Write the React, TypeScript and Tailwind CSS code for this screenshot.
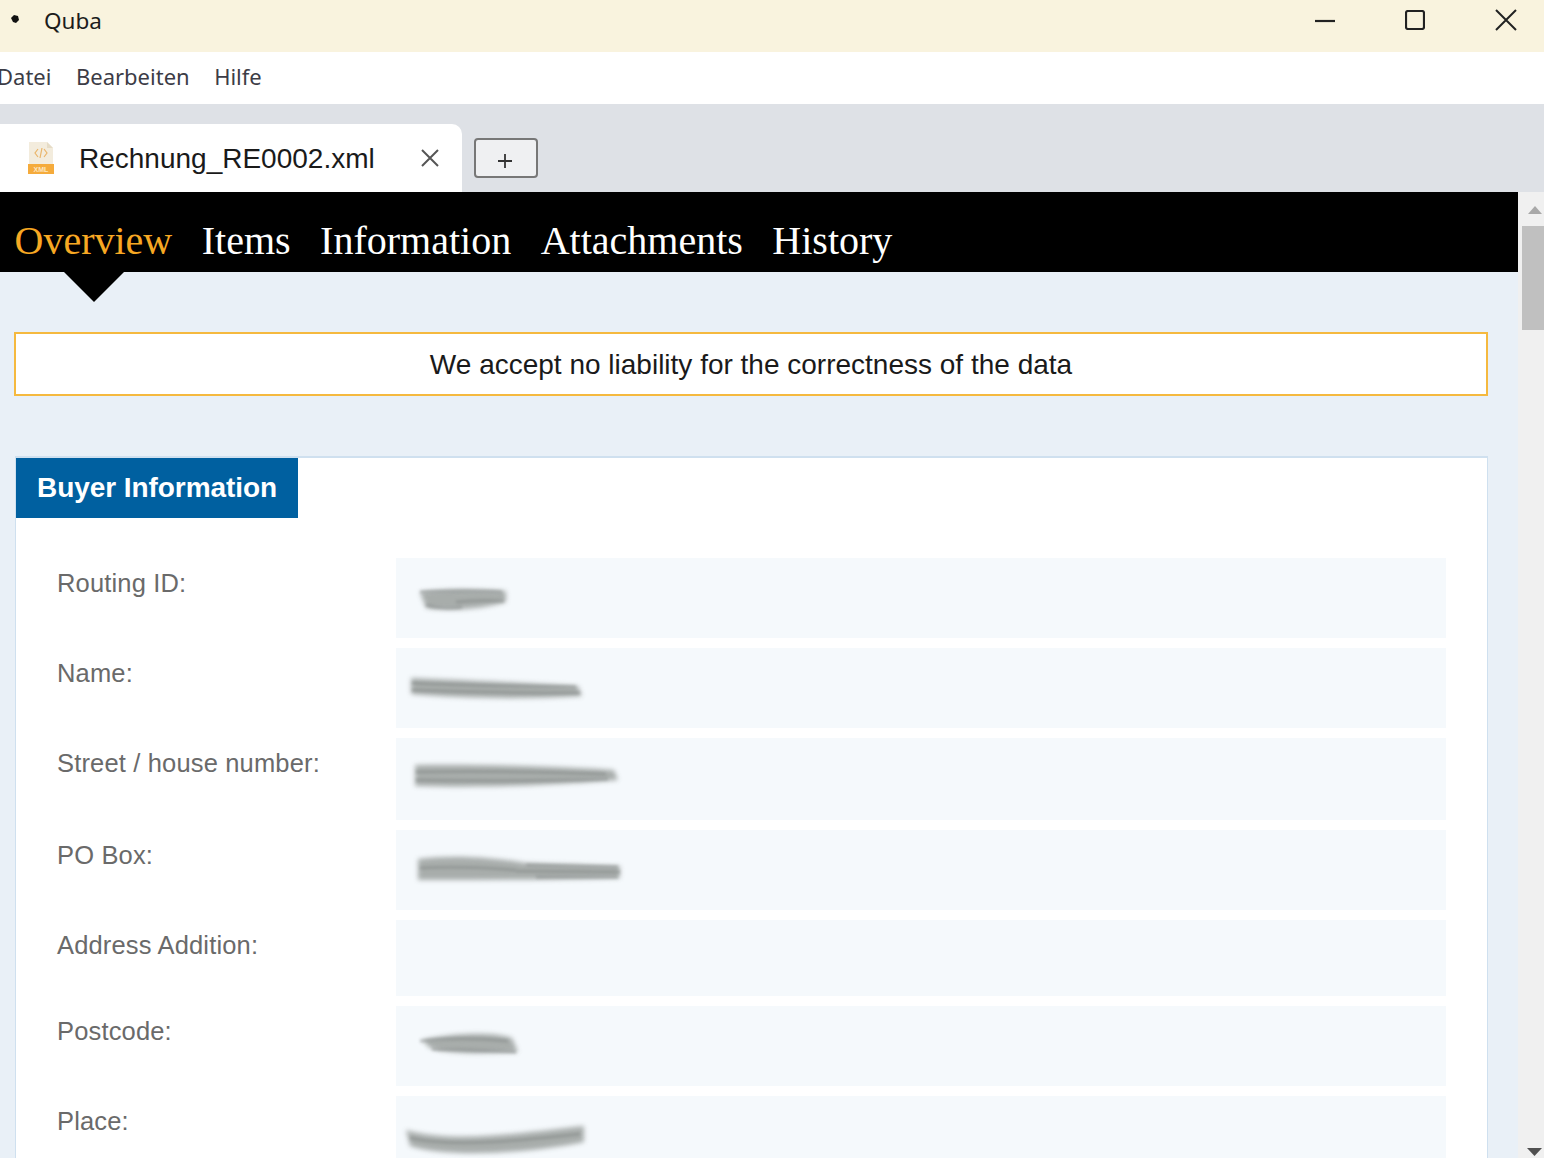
const sans = "font-['Liberation_Sans',Arial,sans-serif]";

const tabs = ["Overview", "Items", "Information", "Attachments", "History"];

// blurred-out values from the screenshot: a soft blob plus a few darker streaks
const rows = [
  {
    label: "Routing ID:",
    h: "h-[80px]",
    smudge: "M24 34 C50 30 80 31 110 33 L110 44 C90 50 60 54 30 50 Z",
    streaks: "M24 34 C50 33 80 32 106 34 M60 44 C75 42 90 42 108 43 M30 47 C40 50 55 51 66 49",
  },
  {
    label: "Name:",
    h: "h-[80px]",
    smudge: "M15 30 C60 32 120 34 182 38 L186 48 C120 52 60 50 15 46 Z",
    streaks: "M16 35 C70 38 130 38 180 39 M16 42 C70 44 130 45 184 45",
  },
  {
    label: "Street / house number:",
    h: "h-[82px]",
    smudge: "M19 27 C80 26 150 28 218 32 L222 42 C150 48 80 50 19 48 Z",
    streaks: "M20 34 C80 33 150 34 210 36 M20 42 C80 43 150 43 212 41",
  },
  {
    label: "PO Box:",
    h: "h-[80px]",
    smudge: "M22 29 C60 24 100 28 130 33 L224 36 L224 48 C160 50 90 50 22 50 Z",
    streaks: "M130 35 L222 37 M120 41 L224 42 M140 47 L222 47 M24 38 C60 36 90 38 120 40",
  },
  { label: "Address Addition:", h: "h-[76px]", smudge: "", streaks: "" },
  {
    label: "Postcode:",
    h: "h-[80px]",
    smudge: "M26 34 C60 26 100 26 116 32 L122 46 C90 48 50 48 34 42 Z",
    streaks: "M24 35 C50 32 80 32 112 35 M36 43 C60 44 90 44 120 46",
  },
  {
    label: "Place:",
    h: "h-[80px]",
    smudge: "M10 34 C60 48 130 36 188 30 L188 46 C130 58 50 62 14 50 Z",
    streaks: "M14 42 C60 52 130 44 184 38",
  },
];

function FileIcon() {
  return (
    <svg width="28" height="34" viewBox="0 0 28 34" className="shrink-0">
      <path d="M2 1 H20 L26 7 V24 H2 Z" fill="#f3ecdd" />
      <path d="M20 1 L26 7 H20 Z" fill="#e6dcc6" />
      <path d="M11 8 L8 12 L11 16 M17 8 L20 12 L17 16 M15 7 L13 17" fill="none" stroke="#eab56a" strokeWidth="1.2" />
      <rect x="1" y="23" width="26" height="10" fill="#f5ab3c" />
      <text x="14" y="31" textAnchor="middle" fontSize="7" fontWeight="700" fill="#fde6c0" fontFamily="Liberation Sans, sans-serif">XML</text>
    </svg>
  );
}

function Row({ label, h, smudge, streaks }: { label: string; h: string; smudge: string; streaks: string }) {
  return (
    <div className="flex">
      <div className="w-[339px] shrink-0 pt-[8px] text-[25.5px] leading-[34px] tracking-[0.16px] text-[#6a6a6a]">{label}</div>
      <div className={`${h} w-[1050px] bg-[#f5f9fc]`}>
        {smudge && (
          <svg width="260" height="80" viewBox="0 0 260 80" className="overflow-visible">
            <path d={smudge} fill="#a0a5a3" opacity="0.9" className="blur-[2.5px]" />
            <path d={streaks} fill="none" stroke="#7d8281" strokeWidth="3" opacity="0.45" className="blur-[1.5px]" />
          </svg>
        )}
      </div>
    </div>
  );
}

export default function App() {
  return (
    <div className={`flex h-screen w-full flex-col overflow-hidden bg-white ${sans}`}>
      {/* title bar */}
      <div className="flex h-[52px] shrink-0 items-center bg-[#f9f3de] pr-[27px]">
        <svg width="10" height="10" viewBox="0 0 10 10" className="mb-[14px] ml-[10px] shrink-0">
          <path d="M1 4 L4 1 L8 2 L9 6 L6 9 L3 8 Z" fill="#111" />
        </svg>
        <span className="mb-[10px] ml-[24px] font-['Noto_Sans',sans-serif] text-[22.5px] text-[#1c1c1c]">Quba</span>
        <div className="ml-auto flex items-center gap-[70px] pb-[12px]">
          <svg width="20" height="20" viewBox="0 0 20 20"><path d="M0 11 H20" stroke="#222" strokeWidth="2.2" /></svg>
          <svg width="20" height="20" viewBox="0 0 20 20"><rect x="1" y="1" width="18" height="18" rx="2" fill="none" stroke="#222" strokeWidth="2.2" /></svg>
          <svg width="22" height="22" viewBox="0 0 22 22"><path d="M1 1 L21 21 M21 1 L1 21" stroke="#222" strokeWidth="2" /></svg>
        </div>
      </div>

      {/* menu bar */}
      <div className="flex h-[52px] shrink-0 items-center gap-[24.5px] pb-[3px] font-['Noto_Sans',sans-serif] text-[22px] text-[#3c3c46]">
        <span className="-ml-[3px]">Datei</span>
        <span>Bearbeiten</span>
        <span>Hilfe</span>
      </div>

      {/* tab bar */}
      <div className="flex h-[88px] shrink-0 items-end bg-[#dee1e6]">
        <div className="flex h-[68px] w-[462px] items-center rounded-tr-[10px] bg-white pl-[27px]">
          <FileIcon />
          <span className="ml-[24px] pt-[2px] text-[28px] text-[#1a1a1a]">Rechnung_RE0002.xml</span>
          <svg width="20" height="20" viewBox="0 0 20 20" className="ml-auto mr-[22px]"><path d="M2 2 L18 18 M18 2 L2 18" stroke="#555" strokeWidth="2" /></svg>
        </div>
        <div className="mb-[14px] ml-[12px] flex h-[40px] w-[64px] items-center justify-center rounded-[4px] border-2 border-[#777] bg-[#eff0f2]">
          <svg width="16" height="16" viewBox="0 0 16 16" className="mr-[2px] mt-[6px]"><path d="M1 8 H15 M8 1 V15" stroke="#333" strokeWidth="1.8" /></svg>
        </div>
      </div>

      {/* webview */}
      <div className="flex min-h-0 flex-1">
        <div className="min-w-0 flex-1 overflow-hidden bg-[#e9f0f7]">
          <nav className="relative flex h-[80px] items-center gap-[29.5px] bg-black pl-[14.5px] pt-[18px] font-['Liberation_Serif',serif] text-[40px] text-white">
            {tabs.map((t, i) => (
              <span key={t} className={i === 0 ? "text-[#f7a823]" : ""}>{t}</span>
            ))}
            <span className="absolute left-[64px] top-[80px] h-0 w-0 border-x-[30px] border-t-[30px] border-x-transparent border-t-black" />
          </nav>

          <div className="ml-[14px] mt-[60px] flex h-[64px] w-[1474px] items-center justify-center border-2 border-[#f5b93f] bg-white pt-[2px] text-[28px] text-[#1a1a1a]">
            We accept no liability for the correctness of the data
          </div>

          <section className="ml-[15px] mt-[60px] w-[1473px] border border-t-2 border-[#cfe0ef] bg-white">
            <h2 className="flex h-[60px] w-[282px] items-center bg-[#0060a0] pl-[21px] text-[28px] font-bold tracking-[-0.06px] text-white">
              Buyer Information
            </h2>
            <div className="flex flex-col gap-[10px] pl-[41px] pt-[40px]">
              {rows.map((r) => (
                <Row key={r.label} {...r} />
              ))}
            </div>
          </section>
        </div>

        {/* scrollbar */}
        <div className="flex w-[26px] shrink-0 flex-col bg-[#f0f0f0]">
          <svg width="26" height="34" viewBox="0 0 26 34" className="shrink-0"><path d="M10 22 L17 14 L24 22 Z" fill="#a8a8a8" /></svg>
          <div className="ml-[4px] h-[104px] w-[22px] shrink-0 bg-[#c0c0c0]" />
          <svg width="26" height="10" viewBox="0 0 26 10" className="mt-auto shrink-0"><path d="M9 0 H24 L16.5 8 Z" fill="#505050" /></svg>
        </div>
      </div>
    </div>
  );
}
